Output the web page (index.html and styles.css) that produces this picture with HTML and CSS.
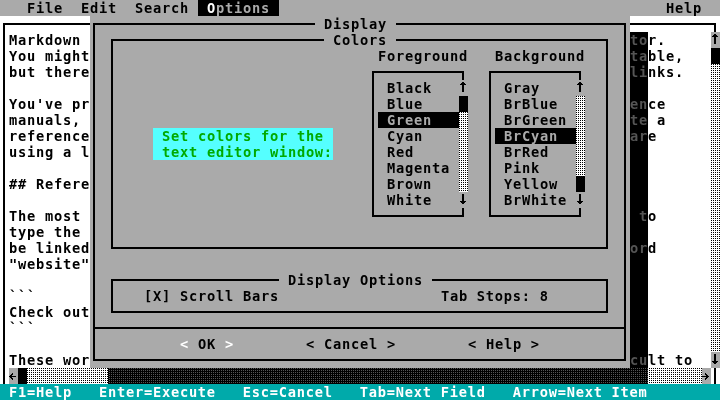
FILE: index.html
```html
<!DOCTYPE html>
<html lang="en">
<head>
    <meta charset="UTF-8">
    <meta name="viewport" content="width=device-width, initial-scale=1.0">
    <title>EDIT - Display</title>
    <link rel="stylesheet" href="styles.css">
</head>
<body>

<div class="screen">
    <!-- barra de menu -->
    <div class="menubar">
        <span class="menu-item">File</span>
        <span class="menu-item">Edit</span>
        <span class="menu-item">Search</span>
        <span class="menu-item active"><b>O</b>ptions</span>
        <span class="menu-item help">Help</span>
    </div>

    <!-- janela do editor (só as partes que o dialogo deixa ver) -->
    <div class="editor box">
        <div class="editor-main">
            <div class="editor-text">
<pre class="text-part">Markdown
You might
but there

You've pr
manuals,
reference
using a l

## Refere

The most
type the
be linked
"website"

&#96;&#96;&#96;
Check out
&#96;&#96;&#96;

These wor</pre>
<pre class="text-part right">tor.
table,
links.

ence
te a
are




 to

ord






cult to</pre>
            </div>
            <div class="vscroll">
                <span class="arrow"><svg class="glyph" viewBox="0 0 9 16"><path d="M3 2h2v1h1v1h1v1H5v7H3V5H1V4h1V3h1z"/></svg></span>
                <span class="thumb"></span>
                <span class="track"></span>
                <span class="arrow"><svg class="glyph" viewBox="0 0 9 16"><path d="M3 2h2v7h2v1H6v1H5v1H3v-1H2v-1H1V9h2z"/></svg></span>
            </div>
        </div>
        <div class="hscroll">
            <span class="arrow"><svg class="glyph" viewBox="0 0 9 16"><path d="M3 5h1v1H3zM2 6h2v1H2zM1 7h2v1H1zM0 8h7v1H0zM1 9h2v1H1zM2 10h2v1H2zM3 11h1v1H3z"/></svg></span>
            <span class="thumb"></span>
            <span class="track"></span>
            <span class="arrow"><svg class="glyph" viewBox="0 0 9 16"><path d="M3 5h1v1H3zM3 6h2v1H3zM4 7h2v1H4zM0 8h7v1H0zM4 9h2v1H4zM3 10h2v1H3zM3 11h1v1H3z"/></svg></span>
        </div>
    </div>

    <!-- barra de status -->
    <div class="statusbar">
        <span>F1=Help</span>
        <span>Enter=Execute</span>
        <span>Esc=Cancel</span>
        <span>Tab=Next Field</span>
        <span>Arrow=Next Item</span>
    </div>

    <!-- sombra e caixa de dialogo -->
    <div class="dialog-shadow"></div>
    <div class="dialog box">
        <div class="dlg-title"><span class="title">Display</span></div>

        <div class="group colors box">
            <div class="group-title"><span class="title">Colors</span></div>
            <div class="colors-body">
                <div class="color-hint">Set colors for the<br>text editor window:</div>

                <div class="color-col">
                    <div class="col-label">Foreground</div>
                    <div class="listbox box">
                        <ul class="list-items">
                            <li>Black</li>
                            <li>Blue</li>
                            <li class="selected">Green</li>
                            <li>Cyan</li>
                            <li>Red</li>
                            <li>Magenta</li>
                            <li>Brown</li>
                            <li>White</li>
                        </ul>
                        <div class="list-scroll">
                            <span class="arrow"><svg class="glyph" viewBox="0 0 9 16"><path d="M3 2h2v1h1v1h1v1H5v7H3V5H1V4h1V3h1z"/></svg></span>
                            <span class="thumb"></span>
                            <span class="track"></span>
                            <span class="arrow"><svg class="glyph" viewBox="0 0 9 16"><path d="M3 2h2v7h2v1H6v1H5v1H3v-1H2v-1H1V9h2z"/></svg></span>
                        </div>
                    </div>
                </div>

                <div class="color-col">
                    <div class="col-label">Background</div>
                    <div class="listbox box">
                        <ul class="list-items">
                            <li>Gray</li>
                            <li>BrBlue</li>
                            <li>BrGreen</li>
                            <li class="selected">BrCyan</li>
                            <li>BrRed</li>
                            <li>Pink</li>
                            <li>Yellow</li>
                            <li>BrWhite</li>
                        </ul>
                        <div class="list-scroll">
                            <span class="arrow"><svg class="glyph" viewBox="0 0 9 16"><path d="M3 2h2v1h1v1h1v1H5v7H3V5H1V4h1V3h1z"/></svg></span>
                            <span class="track"></span>
                            <span class="thumb"></span>
                            <span class="arrow"><svg class="glyph" viewBox="0 0 9 16"><path d="M3 2h2v7h2v1H6v1H5v1H3v-1H2v-1H1V9h2z"/></svg></span>
                        </div>
                    </div>
                </div>
            </div>
        </div>

        <div class="group options box">
            <div class="group-title"><span class="title">Display Options</span></div>
            <div class="options-body">
                <span>[X] Scroll Bars</span>
                <span class="tab-stops">Tab Stops: 8</span>
            </div>
        </div>

        <div class="dlg-sep"></div>

        <div class="dlg-buttons">
            <span class="btn default"><span class="bracket">&lt;</span><span class="btn-label"> OK </span><span class="bracket">&gt;</span></span>
            <span class="btn">&lt; Cancel &gt;</span>
            <span class="btn">&lt; Help &gt;</span>
        </div>
    </div>
</div>

</body>
</html>
```

FILE: styles.css
```css
:root {
    --c: 9px;   /* largura de uma celula */
    --r: 16px;  /* altura de uma linha */
}
* {
    box-sizing: border-box;
}
body {
    margin: 0;
    background-color: #000;
}
.screen {
    position: relative;
    width: 720px;
    height: 400px;
    overflow: hidden;
    font-family: "DejaVu Sans Mono", "Liberation Mono", monospace;
    font-weight: bold;
    font-size: 13.7px;
    letter-spacing: 0.752px; /* avanço de 9px por caractere */
    line-height: 16px;
    color: #000;
}

/* moldura de linha simples, desenhada no meio das celulas */
.box {
    position: relative;
}
.box::before {
    content: "";
    position: absolute;
    top: 7px;
    right: 4px;
    bottom: 7px;
    left: 3px;
    border: 2px solid #000;
    pointer-events: none;
}
.title {
    position: relative;
    display: inline-block;
    height: var(--r);
    padding: 0 var(--c);
    background-color: #aaa;
}

/* menu */
.menubar {
    display: flex;
    height: var(--r);
    padding: 0 var(--c) 0 calc(var(--c) * 2);
    background-color: #aaa;
}
.menu-item {
    padding: 0 var(--c);
}
.menu-item.active {
    background-color: #000;
    color: #aaa;
}
.menu-item.active b {
    color: #fff;
    font-weight: inherit;
}
.menu-item.help {
    margin-left: auto;
}

/* editor */
.editor {
    height: calc(var(--r) * 23);
    padding: var(--r) 0 0 var(--c);
    background-color: #fff;
}
.editor::before {
    bottom: 0;
    border-bottom: 0;
}
.editor-main {
    position: relative;
    display: flex;
    height: calc(var(--r) * 21);
}
.editor-text {
    display: flex;
    justify-content: space-between;
    width: calc(var(--c) * 78);
    overflow: hidden;
}
.text-part {
    width: calc(var(--c) * 9);
    margin: 0;
    font: inherit;
    white-space: pre;
}
.vscroll,
.list-scroll {
    position: relative;
    display: flex;
    flex-direction: column;
    width: var(--c);
}
.hscroll {
    position: relative;
    display: flex;
    width: calc(var(--c) * 78);
    height: var(--r);
}
.arrow {
    flex: none;
    width: var(--c);
    height: var(--r);
    background-color: #aaa;
}
.glyph {
    display: block;
    width: var(--c);
    height: var(--r);
    fill: #000;
    shape-rendering: crispEdges;
}
.thumb {
    flex: none;
    width: var(--c);
    height: var(--r);
    background-color: #000;
}
.track {
    flex: 1;
    background-color: #fff;
    background-image: conic-gradient(at 1px 1px, transparent 75%, #000 0);
    background-size: 2px 2px;
}

/* status */
.statusbar {
    display: flex;
    gap: calc(var(--c) * 3);
    height: var(--r);
    padding-left: var(--c);
    background-color: #00aaaa;
    color: #fff;
}

/* dialogo */
.dialog-shadow {
    position: absolute;
    left: calc(var(--c) * 12);
    top: calc(var(--r) * 2);
    width: calc(var(--c) * 60);
    height: calc(var(--r) * 22);
    backdrop-filter: invert(1) brightness(0.333);
}
.dialog {
    position: absolute;
    left: calc(var(--c) * 10);
    top: var(--r);
    width: calc(var(--c) * 60);
    height: calc(var(--r) * 22);
    display: flex;
    flex-direction: column;
    background-color: #aaa;
}
.dlg-title {
    height: var(--r);
    padding-left: calc(var(--c) * 25);
}
.group {
    margin-left: calc(var(--c) * 2);
    width: calc(var(--c) * 56);
}
.group-title {
    height: var(--r);
}
.colors {
    height: calc(var(--r) * 14);
}
.colors .group-title {
    padding-left: calc(var(--c) * 24);
}
.colors-body {
    display: flex;
    align-items: flex-start;
    height: calc(var(--r) * 12);
    padding-left: calc(var(--c) * 5);
}
.color-hint {
    width: calc(var(--c) * 20);
    margin-top: calc(var(--r) * 5);
    padding-left: var(--c);
    background-color: #55ffff;
    color: #00aa00;
}
.color-col {
    margin-left: calc(var(--c) * 4);
}
.color-col + .color-col {
    margin-left: calc(var(--c) * 2);
}
.col-label {
    height: var(--r);
    padding-left: var(--c);
}
.listbox {
    display: flex;
    height: calc(var(--r) * 10);
    padding: var(--r) 0 var(--r) var(--c);
}
.list-items {
    list-style: none;
    margin: 0;
    padding: 0;
    width: calc(var(--c) * 9);
}
.list-items li {
    height: var(--r);
    padding-left: var(--c);
}
.list-items li.selected {
    background-color: #000;
    color: #aaa;
}
.options {
    height: calc(var(--r) * 3);
    margin-top: var(--r);
}
.options .group-title {
    padding-left: calc(var(--c) * 19);
}
.options-body {
    display: flex;
    height: var(--r);
    padding-left: calc(var(--c) * 4);
}
.tab-stops {
    margin-left: calc(var(--c) * 18);
}
.dlg-sep {
    position: relative;
    height: var(--r);
}
.dlg-sep::before {
    content: "";
    position: absolute;
    left: 3px;
    right: 4px;
    top: 7px;
    height: 2px;
    background-color: #000;
}
.dlg-buttons {
    display: flex;
    gap: calc(var(--c) * 8);
    height: var(--r);
    padding-left: calc(var(--c) * 10);
}
.btn-label {
    white-space: pre;
}
.btn.default .bracket {
    color: #fff;
}
```
